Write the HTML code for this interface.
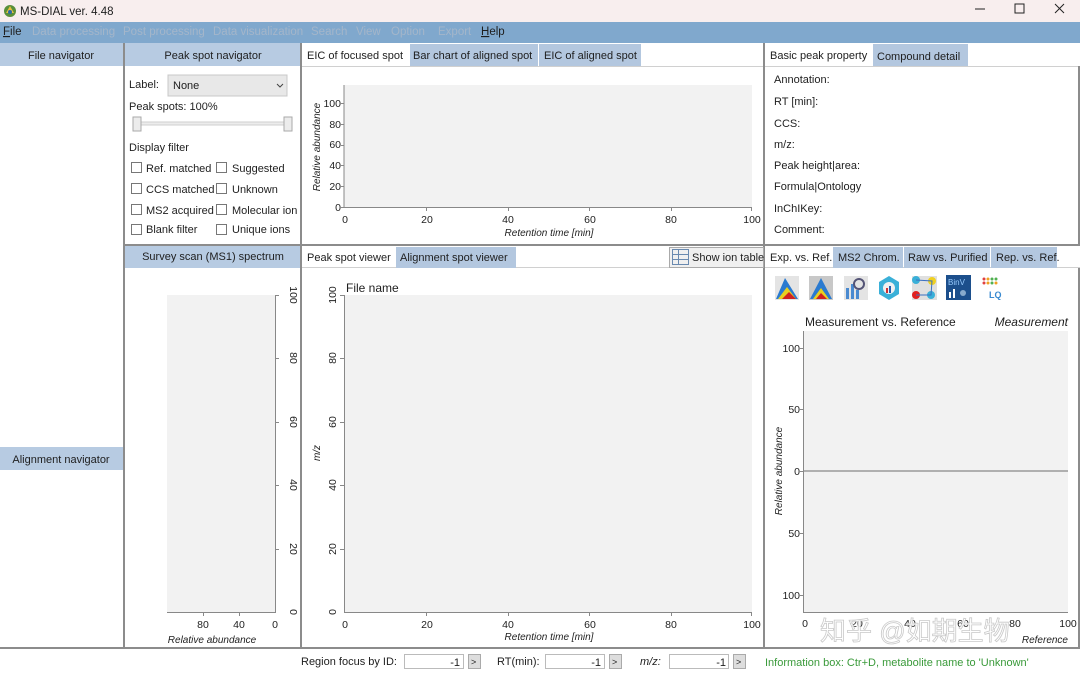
<!DOCTYPE html>
<html><head><meta charset="utf-8"><style>
html,body{margin:0;padding:0;width:1080px;height:675px;overflow:hidden;background:#fff}
svg{display:block;font-family:"Liberation Sans","Noto Sans CJK SC",sans-serif}
</style></head><body>
<svg width="1080" height="675" viewBox="0 0 1080 675" xmlns="http://www.w3.org/2000/svg" font-size="11" fill="#1e1e1e">
<rect x="0" y="0" width="1080" height="22" fill="#f8eeee"/>
<g transform="translate(4,4)"><circle cx="6" cy="7" r="6" fill="#5a8f3a"/><path d="M2 9 L6 2 L10 9Z" fill="#e8c040"/><circle cx="6" cy="8" r="2" fill="#2d6aa8"/></g>
<text x="20" y="15" font-size="11.5">MS-DIAL ver. 4.48</text>
<line x1="975" y1="9" x2="985" y2="9" stroke="#222"/>
<rect x="1015" y="4" width="9" height="9" fill="none" stroke="#222"/>
<path d="M1055 4 L1064 13 M1064 4 L1055 13" stroke="#222"/>
<rect x="0" y="22" width="1080" height="21" fill="#80a8cd"/>
<g font-size="11.5">
<text x="3" y="35"><tspan text-decoration="underline">F</tspan>ile</text>
<g fill="#a4b6ca"><text x="32" y="35">Data processing</text><text x="123" y="35">Post processing</text><text x="213" y="35">Data visualization</text><text x="311" y="35">Search</text><text x="356" y="35">View</text><text x="391" y="35">Option</text><text x="438" y="35">Export</text></g>
<text x="481" y="35"><tspan text-decoration="underline">H</tspan>elp</text>
</g>
<rect x="123" y="43" width="2" height="606" fill="#8c8c8c"/>
<rect x="300" y="43" width="2" height="606" fill="#8c8c8c"/>
<rect x="763" y="43" width="2" height="606" fill="#8c8c8c"/>
<rect x="123" y="244" width="957" height="2" fill="#8c8c8c"/>
<rect x="0" y="647" width="1080" height="2" fill="#8c8c8c"/>
<rect x="0" y="649" width="1080" height="26" fill="#fff"/>
<rect x="0" y="43" width="123" height="23" fill="#b7cbe2"/>
<text x="61" y="59" text-anchor="middle">File navigator</text>
<rect x="125" y="43" width="175" height="23" fill="#b7cbe2"/>
<text x="213" y="59" text-anchor="middle">Peak spot navigator</text>
<rect x="0" y="447" width="123" height="23" fill="#b7cbe2"/>
<text x="61" y="463" text-anchor="middle">Alignment navigator</text>
<rect x="125" y="246" width="175" height="22" fill="#b7cbe2"/>
<text x="213" y="260" text-anchor="middle">Survey scan (MS1) spectrum</text>
<text x="129" y="88">Label:</text>
<rect x="168" y="75" width="119" height="21" fill="#e8e8e8" stroke="#c8c8c8"/>
<text x="173" y="89">None</text>
<path d="M277 84 l3 3 l3 -3" fill="none" stroke="#444"/>
<text x="129" y="110">Peak spots: 100%</text>
<rect x="138" y="122" width="150" height="3" fill="#ececec" stroke="#cfcfcf"/>
<rect x="133" y="117" width="8" height="14" fill="#ececec" stroke="#aaa"/>
<rect x="284" y="117" width="8" height="14" fill="#ececec" stroke="#aaa"/>
<text x="129" y="151">Display filter</text>
<g fill="#fff" stroke="#777"><rect x="131.5" y="162.5" width="10" height="10"/><rect x="216.5" y="162.5" width="10" height="10"/><rect x="131.5" y="183.5" width="10" height="10"/><rect x="216.5" y="183.5" width="10" height="10"/><rect x="131.5" y="204.5" width="10" height="10"/><rect x="216.5" y="204.5" width="10" height="10"/><rect x="131.5" y="224.5" width="10" height="10"/><rect x="216.5" y="224.5" width="10" height="10"/></g>
<text x="146" y="172">Ref. matched</text><text x="232" y="172">Suggested</text>
<text x="146" y="193">CCS matched</text><text x="232" y="193">Unknown</text>
<text x="146" y="214">MS2 acquired</text><text x="232" y="214">Molecular ion</text>
<text x="146" y="233">Blank filter</text><text x="232" y="233">Unique ions</text>
<line x1="302" y1="66.5" x2="763" y2="66.5" stroke="#d0d0d0"/>
<rect x="410" y="44" width="128" height="22" fill="#b3c7df"/>
<rect x="539" y="44" width="102" height="22" fill="#b3c7df"/>
<text x="307" y="59">EIC of focused spot</text>
<text x="413" y="59">Bar chart of aligned spot</text>
<text x="544" y="59">EIC of aligned spot</text>
<rect x="344" y="85" width="408" height="122" fill="#f2f2f2"/>
<line x1="344" y1="85" x2="344" y2="208" stroke="#888"/><line x1="344" y1="207.5" x2="752" y2="207.5" stroke="#888"/>
<path d="M341 207.5h3M341 186.5h3M341 165.5h3M341 145.5h3M341 124.5h3M341 103.5h3M426.5 207v4M508.5 207v4M589.5 207v4M671.5 207v4M751.5 207v4" stroke="#888"/>
<g font-size="10.5" text-anchor="end"><text x="341" y="211">0</text><text x="341" y="190">20</text><text x="341" y="169">40</text><text x="341" y="148">60</text><text x="341" y="128">80</text><text x="341" y="107">100</text></g>
<g font-size="10.5" text-anchor="middle"><text x="345" y="223">0</text><text x="427" y="223">20</text><text x="508" y="223">40</text><text x="590" y="223">60</text><text x="671" y="223">80</text><text x="752" y="223">100</text></g>
<text x="549" y="236" font-size="10" font-style="italic" text-anchor="middle">Retention time [min]</text>
<text transform="translate(320,147) rotate(-90)" font-size="10" font-style="italic" text-anchor="middle">Relative abundance</text>
<line x1="765" y1="66.5" x2="1080" y2="66.5" stroke="#d0d0d0"/>
<rect x="873" y="44" width="95" height="22" fill="#b3c7df"/>
<text x="770" y="59">Basic peak property</text>
<text x="877" y="60">Compound detail</text>
<rect x="1078" y="66" width="2" height="178" fill="#8c8c8c"/>
<text x="774" y="83">Annotation:</text><text x="774" y="105">RT [min]:</text><text x="774" y="127">CCS:</text><text x="774" y="148">m/z:</text><text x="774" y="169">Peak height|area:</text><text x="774" y="190">Formula|Ontology</text><text x="774" y="212">InChIKey:</text><text x="774" y="233">Comment:</text>
<line x1="302" y1="267.5" x2="763" y2="267.5" stroke="#d0d0d0"/>
<rect x="396" y="247" width="120" height="21" fill="#b3c7df"/>
<text x="307" y="261">Peak spot viewer</text>
<text x="400" y="261">Alignment spot viewer</text>
<rect x="669.5" y="247.5" width="94" height="20" fill="#f0f0f0" stroke="#aaa"/>
<g fill="none" stroke="#6a8ab0"><rect x="672.5" y="249.5" width="16" height="15"/><line x1="672" y1="254.5" x2="689" y2="254.5"/><line x1="672" y1="259.5" x2="689" y2="259.5"/><line x1="678.5" y1="250" x2="678.5" y2="265"/></g>
<text x="692" y="261">Show ion table</text>
<rect x="167" y="295" width="108" height="317" fill="#f2f2f2"/>
<line x1="275.5" y1="295" x2="275.5" y2="613" stroke="#888"/><line x1="167" y1="612.5" x2="276" y2="612.5" stroke="#888"/>
<path d="M275 295.5h4M275 358.5h4M275 422.5h4M275 485.5h4M275 549.5h4M203.5 612v4M239.5 612v4" stroke="#888"/>
<g font-size="10.5" text-anchor="middle"><text transform="translate(290,612) rotate(90)">0</text><text transform="translate(290,549) rotate(90)">20</text><text transform="translate(290,485) rotate(90)">40</text><text transform="translate(290,422) rotate(90)">60</text><text transform="translate(290,358) rotate(90)">80</text><text transform="translate(290,295) rotate(90)">100</text>
<text x="203" y="628">80</text><text x="239" y="628">40</text><text x="275" y="628">0</text></g>
<text x="212" y="643" font-size="10" font-style="italic" text-anchor="middle">Relative abundance</text>
<rect x="345" y="295" width="407" height="317" fill="#f2f2f2"/>
<line x1="344.5" y1="295" x2="344.5" y2="613" stroke="#888"/><line x1="344" y1="612.5" x2="752" y2="612.5" stroke="#888"/>
<path d="M340 295.5h4M340 358.5h4M340 422.5h4M340 485.5h4M340 549.5h4M426.5 612v4M508.5 612v4M589.5 612v4M671.5 612v4M751.5 612v4" stroke="#888"/>
<text x="346" y="292" font-size="12">File name</text>
<g font-size="10.5" text-anchor="middle"><text transform="translate(336,612) rotate(-90)">0</text><text transform="translate(336,549) rotate(-90)">20</text><text transform="translate(336,485) rotate(-90)">40</text><text transform="translate(336,422) rotate(-90)">60</text><text transform="translate(336,358) rotate(-90)">80</text><text transform="translate(336,295) rotate(-90)">100</text>
<text x="345" y="628">0</text><text x="427" y="628">20</text><text x="508" y="628">40</text><text x="590" y="628">60</text><text x="671" y="628">80</text><text x="752" y="628">100</text></g>
<text x="549" y="640" font-size="10" font-style="italic" text-anchor="middle">Retention time [min]</text>
<text transform="translate(320,453) rotate(-90)" font-size="10" font-style="italic" text-anchor="middle">m/z</text>
<line x1="765" y1="267.5" x2="1080" y2="267.5" stroke="#d0d0d0"/>
<rect x="833" y="247" width="70" height="21" fill="#b3c7df"/>
<rect x="904" y="247" width="86" height="21" fill="#b3c7df"/>
<rect x="991" y="247" width="66" height="21" fill="#b3c7df"/>
<text x="770" y="261">Exp. vs. Ref.</text><text x="838" y="261">MS2 Chrom.</text><text x="908" y="261">Raw vs. Purified</text><text x="996" y="261">Rep. vs. Ref.</text>
<rect x="1078" y="268" width="2" height="380" fill="#8c8c8c"/>
<g><rect x="775" y="276" width="24" height="24" fill="#e4e4e4"/><path d="M776 299 L785 278 L798 299Z" fill="#2a7ad0"/><path d="M778 299 L787 287 L796 299Z" fill="#e8d020"/><path d="M782 299 L789 292 L796 299Z" fill="#d02020"/>
<rect x="809" y="276" width="24" height="24" fill="#c8c8c8"/><path d="M810 299 L821 278 L832 299Z" fill="#2a7ad0"/><path d="M813 299 L821 288 L829 299Z" fill="#e8d020"/><path d="M816 299 L821 293 L827 299Z" fill="#d02020"/>
<rect x="844" y="276" width="24" height="24" fill="#e4e4e4"/><rect x="846" y="288" width="3" height="11" fill="#4a8ad0"/><rect x="851" y="284" width="3" height="15" fill="#4a8ad0"/><rect x="856" y="290" width="3" height="9" fill="#4a8ad0"/><circle cx="859" cy="284" r="5" fill="none" stroke="#557" stroke-width="2"/>
<path d="M889 276 L899 282 L899 294 L889 300 L879 294 L879 282Z" fill="#3ab0d8"/><circle cx="889" cy="288" r="6" fill="#f0f0f0"/><rect x="886" y="288" width="2" height="5" fill="#d03030"/><rect x="889" y="286" width="2" height="7" fill="#2060b0"/>
<rect x="912" y="276" width="25" height="24" fill="#e0e0e0"/><circle cx="916" cy="280" r="4" fill="#3ab0d8"/><circle cx="932" cy="281" r="4" fill="#f0d020"/><circle cx="916" cy="295" r="4" fill="#e02020"/><circle cx="931" cy="295" r="4" fill="#3ab0d8"/><path d="M916 280 L932 281 L931 295 L916 295" fill="none" stroke="#3a70c0"/>
<rect x="946" y="275" width="25" height="25" fill="#1c4f8c"/><text x="948" y="285" font-size="8" fill="#9cf">BinV</text><rect x="949" y="292" width="2" height="6" fill="#fff"/><rect x="953" y="289" width="2" height="9" fill="#fff"/><circle cx="963" cy="293" r="3" fill="#8ac"/>
<g fill="#e04040"><circle cx="984" cy="279" r="1.5"/><circle cx="988" cy="279" r="1.5" fill="#f0a020"/><circle cx="992" cy="279" r="1.5" fill="#50b050"/><circle cx="996" cy="279" r="1.5" fill="#50b050"/><circle cx="984" cy="283" r="1.5"/><circle cx="988" cy="283" r="1.5" fill="#f0a020"/><circle cx="992" cy="283" r="1.5" fill="#50b050"/><circle cx="996" cy="283" r="1.5" fill="#f0a020"/></g><text x="989" y="298" font-size="9" fill="#3a8ad0" font-weight="bold">LQ</text></g>
<text x="805" y="326" font-size="12">Measurement vs. Reference</text>
<text x="1068" y="326" font-size="12" font-style="italic" text-anchor="end">Measurement</text>
<rect x="804" y="331" width="264" height="281" fill="#f2f2f2"/>
<line x1="803.5" y1="331" x2="803.5" y2="613" stroke="#888"/><line x1="803" y1="612.5" x2="1068" y2="612.5" stroke="#888"/>
<path d="M800 348.5h4M800 409.5h4M800 471.5h4M800 533.5h4M800 595.5h4" stroke="#888"/>
<line x1="804" y1="471" x2="1068" y2="471" stroke="#999" stroke-width="1.5"/>
<g font-size="10.5" text-anchor="end"><text x="800" y="352">100</text><text x="800" y="413">50</text><text x="800" y="475">0</text><text x="800" y="537">50</text><text x="800" y="599">100</text></g>
<g font-size="10.5" text-anchor="middle"><text x="805" y="627">0</text><text x="857" y="627">20</text><text x="910" y="627">40</text><text x="963" y="627">60</text><text x="1015" y="627">80</text><text x="1068" y="627">100</text></g>
<text x="1068" y="643" font-size="10" font-style="italic" text-anchor="end">Reference</text>
<text transform="translate(782,471) rotate(-90)" font-size="10" font-style="italic" text-anchor="middle">Relative abundance</text>
<text x="820" y="640" font-size="26" fill="#ffffff" stroke="#c4c4c4" stroke-width="0.8" opacity="0.9">知乎 @如期生物</text>
<text x="301" y="665">Region focus by ID:</text>
<rect x="404.5" y="654.5" width="59" height="14" fill="#fff" stroke="#bbb"/><text x="460" y="666" text-anchor="end">-1</text>
<rect x="468.5" y="654.5" width="12" height="14" fill="#ddd" stroke="#aaa"/><text x="471" y="665" font-size="9">&gt;</text>
<text x="497" y="665">RT(min):</text>
<rect x="545.5" y="654.5" width="59" height="14" fill="#fff" stroke="#bbb"/><text x="601" y="666" text-anchor="end">-1</text>
<rect x="609.5" y="654.5" width="12" height="14" fill="#ddd" stroke="#aaa"/><text x="612" y="665" font-size="9">&gt;</text>
<text x="640" y="665" font-style="italic">m/z:</text>
<rect x="669.5" y="654.5" width="59" height="14" fill="#fff" stroke="#bbb"/><text x="726" y="666" text-anchor="end">-1</text>
<rect x="733.5" y="654.5" width="12" height="14" fill="#ddd" stroke="#aaa"/><text x="736" y="665" font-size="9">&gt;</text>
<text x="765" y="666" fill="#3a9a3a">Information box: Ctr+D, metabolite name to 'Unknown'</text>
</svg>
</body></html>
